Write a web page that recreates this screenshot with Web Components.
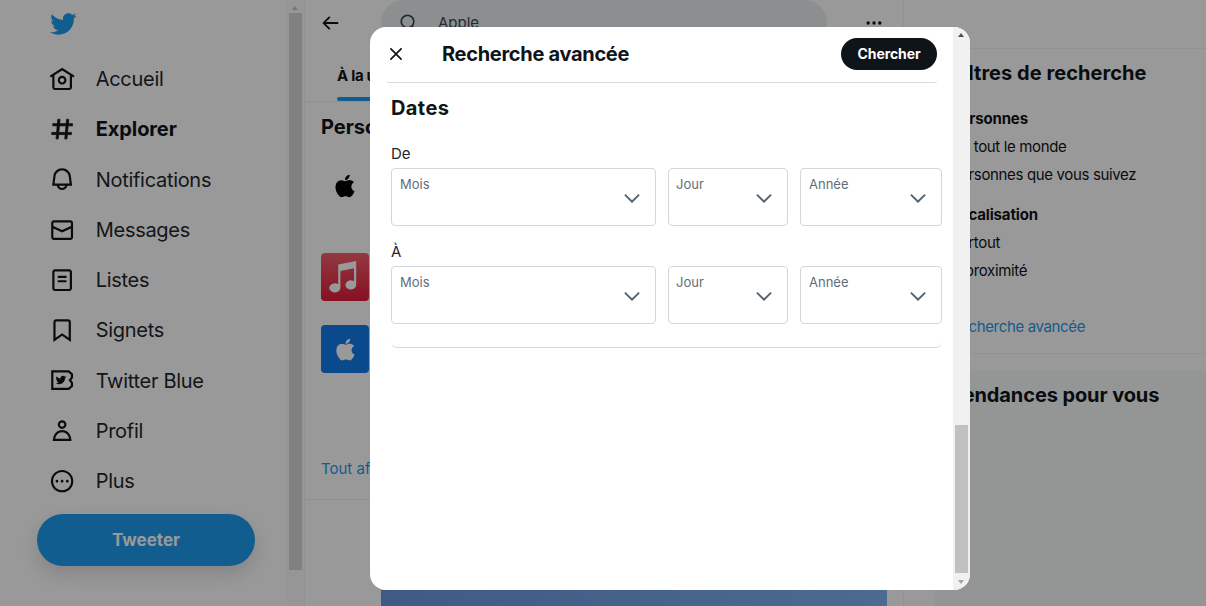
<!DOCTYPE html>
<html lang="fr">
<head>
<meta charset="utf-8">
<title>Recherche avancée</title>
<style>
  html, body { margin: 0; height: 100%; overflow: hidden; background: #fff; }
  body { font-family: Inter, "Noto Sans", "Liberation Sans", sans-serif; color: #0f1419; }
</style>
</head>
<body>
<app-shell>
  <side-nav slot="nav"></side-nav>
  <fake-scrollbar slot="bar" thumb-top="13" thumb-height="557" color="#d5d5d5" track="#fbfbfb" up="#c4c4c4" no-down></fake-scrollbar>
  <search-column slot="main"></search-column>
  <filter-column slot="aside"></filter-column>
</app-shell>
<advanced-modal>
  <date-row label="De"></date-row>
  <date-row label="À"></date-row>
</advanced-modal>

<script>
// Icon paths, all on a 24x24 box
const ICONS = {
  bird: 'M23.643 4.937c-.835.37-1.732.62-2.675.733.962-.576 1.7-1.49 2.048-2.578-.9.534-1.897.922-2.958 1.13-.85-.904-2.06-1.47-3.4-1.47-2.572 0-4.658 2.086-4.658 4.66 0 .364.042.718.12 1.06-3.873-.195-7.304-2.05-9.602-4.868-.4.69-.63 1.49-.63 2.342 0 1.616.823 3.043 2.072 3.878-.764-.025-1.482-.234-2.11-.583v.06c0 2.257 1.605 4.14 3.737 4.568-.392.106-.803.162-1.227.162-.3 0-.593-.028-.877-.082.593 1.85 2.313 3.198 4.352 3.234-1.595 1.25-3.604 1.995-5.786 1.995-.376 0-.747-.022-1.112-.065 2.062 1.323 4.51 2.093 7.14 2.093 8.57 0 13.255-7.098 13.255-13.254 0-.2-.005-.402-.014-.602.91-.658 1.7-1.477 2.323-2.41z',
  home: 'M12 9c-2.209 0-4 1.791-4 4s1.791 4 4 4 4-1.791 4-4-1.791-4-4-4zm0 6c-1.105 0-2-.895-2-2s.895-2 2-2 2 .895 2 2-.895 2-2 2zm0-13.304L.622 8.807l1.06 1.696L3 9.679V19.5C3 20.881 4.119 22 5.5 22h13c1.381 0 2.5-1.119 2.5-2.5V9.679l1.318.824 1.06-1.696L12 1.696zM19 19.5c0 .276-.224.5-.5.5h-13c-.276 0-.5-.224-.5-.5V8.429l7-4.375 7 4.375V19.5z',
  hash: 'M10.09 3.098L9.72 7h5.99l.39-4.089 1.99.187L17.72 7h3.78v2h-3.97l-.56 6h3.53v2h-3.72l-.38 4.089-1.99-.187.36-3.902H8.78l-.38 4.089-1.99-.187L6.77 17H2.5v-2h4.46l.56-6H3.5V7h4.21l.39-4.089 1.99.187zM14.96 15l.56-6H9.53l-.56 6h5.99z',
  bell: 'M19.993 9.042C19.48 5.017 16.054 2 11.996 2s-7.49 3.021-7.999 7.051L2.866 18H7.1c.463 2.282 2.481 4 4.9 4s4.437-1.718 4.9-4h4.236l-1.143-8.958zM12 20c-1.306 0-2.417-.835-2.829-2h5.658c-.412 1.165-1.523 2-2.829 2zm-6.866-4l.847-6.698C6.364 6.272 8.941 4 11.996 4s5.627 2.268 6.013 5.295L18.864 16H5.134z',
  mail: 'M1.998 5.5c0-1.381 1.119-2.5 2.5-2.5h15c1.381 0 2.5 1.119 2.5 2.5v13c0 1.381-1.119 2.5-2.5 2.5h-15c-1.381 0-2.5-1.119-2.5-2.5v-13zm2.5-.5c-.276 0-.5.224-.5.5v2.764l8 3.638 8-3.636V5.5c0-.276-.224-.5-.5-.5h-15zm15.5 5.463l-8 3.636-8-3.638V18.5c0 .276.224.5.5.5h15c.276 0 .5-.224.5-.5v-8.037z',
  list: 'M3 4.5C3 3.12 4.119 2 5.5 2h13C19.881 2 21 3.12 21 4.5v15c0 1.38-1.119 2.5-2.5 2.5h-13C4.119 22 3 20.88 3 19.5v-15zM5.5 4c-.276 0-.5.22-.5.5v15c0 .28.224.5.5.5h13c.276 0 .5-.22.5-.5v-15c0-.28-.224-.5-.5-.5h-13zM16 10H8V8h8v2zm-8 2h8v2H8v-2z',
  mark: 'M4 4.5C4 3.12 5.119 2 6.5 2h11C18.881 2 20 3.12 20 4.5v18.44l-8-5.71-8 5.71V4.5zM6.5 4c-.276 0-.5.22-.5.5v14.56l6-4.29 6 4.29V4.5c0-.28-.224-.5-.5-.5h-11z',
  blue: 'M2 3h16.4L22 6.2v3.7L20.4 12l1.6 2.1v3.7L18.4 21H2V3zm2 2v14h13.6l2.4-2.1v-2.1L17.9 12 20 9.2V7.1L17.6 5H4zm3.2 3.9c.9.9 2 1.5 3.3 1.6-.2-1.5 1-2.6 2.2-2.6.6 0 1.2.3 1.6.7.5-.1.9-.3 1.3-.5-.2.5-.5.9-1 1.2.4 0 .8-.2 1.2-.3-.3.4-.7.8-1.1 1.1 0 3-2.2 5.6-5.5 5.6-1.1 0-2.1-.3-3-.9 1 .1 2-.2 2.7-.8-.8 0-1.5-.6-1.8-1.3.3.1.5.1.8 0-.9-.2-1.5-1-1.5-1.9.3.1.5.2.8.2-.8-.6-1.1-1.7-.5-2.1z',
  user: 'M5.651 19h12.698c-.337-1.8-1.023-3.21-1.945-4.19C15.318 13.65 13.838 13 12 13s-3.317.65-4.404 1.81c-.922.98-1.608 2.39-1.945 4.19zm.486-5.56C7.627 11.85 9.648 11 12 11s4.373.85 5.863 2.44c1.477 1.58 2.366 3.8 2.632 6.46l.11 1.1H3.395l.11-1.1c.266-2.66 1.155-4.88 2.632-6.46zM12 4c-1.105 0-2 .9-2 2s.895 2 2 2 2-.9 2-2-.895-2-2-2zM8 6c0-2.21 1.791-4 4-4s4 1.79 4 4-1.791 4-4 4-4-1.79-4-4z',
  more: 'M3.75 12c0-4.56 3.69-8.25 8.25-8.25s8.25 3.69 8.25 8.25-3.69 8.25-8.25 8.25S3.75 16.56 3.75 12zM12 1.75C6.34 1.75 1.75 6.34 1.75 12S6.34 22.25 12 22.25 22.25 17.66 22.25 12 17.66 1.75 12 1.75zm-4.75 11.5c.69 0 1.25-.56 1.25-1.25s-.56-1.25-1.25-1.25S6 11.31 6 12s.56 1.25 1.25 1.25zm9.5 0c.69 0 1.25-.56 1.25-1.25s-.56-1.25-1.25-1.25-1.25.56-1.25 1.25.56 1.25 1.25 1.25zM13.25 12c0 .69-.56 1.25-1.25 1.25s-1.25-.56-1.25-1.25.56-1.25 1.25-1.25 1.25.56 1.25 1.25z',
  back: 'M7.414 13l5.043 5.04-1.414 1.42L3.586 12l7.457-7.46 1.414 1.42L7.414 11H21v2H7.414z',
  search: 'M10.25 3.75c-3.59 0-6.5 2.91-6.5 6.5s2.91 6.5 6.5 6.5c1.795 0 3.419-.726 4.596-1.904 1.178-1.177 1.904-2.801 1.904-4.596 0-3.59-2.91-6.5-6.5-6.5zm-8.5 6.5c0-4.694 3.806-8.5 8.5-8.5s8.5 3.806 8.5 8.5c0 1.986-.682 3.815-1.824 5.262l4.781 4.781-1.414 1.414-4.781-4.781c-1.447 1.142-3.276 1.824-5.262 1.824-4.694 0-8.5-3.806-8.5-8.5z',
  close: 'M10.59 12L4.54 5.96l1.42-1.42L12 10.59l6.04-6.05 1.42 1.42L13.41 12l6.05 6.04-1.42 1.42L12 13.41l-6.04 6.05-1.42-1.42L10.59 12z',
  chevron: 'M3.543 8.96l1.414-1.42L12 14.59l7.043-7.05 1.414 1.42L12 17.41 3.543 8.96z',
  dots: 'M3 12a2 2 0 1 1 4 0 2 2 0 0 1-4 0zm7 0a2 2 0 1 1 4 0 2 2 0 0 1-4 0zm7 0a2 2 0 1 1 4 0 2 2 0 0 1-4 0z',
  apple: 'M17.05 20.28c-.98.95-2.05.8-3.08.35-1.09-.46-2.09-.48-3.24 0-1.44.62-2.2.44-3.06-.35C2.79 15.25 3.51 7.59 9.05 7.31c1.35.07 2.29.74 3.08.8 1.18-.24 2.31-.93 3.57-.84 1.51.12 2.65.72 3.4 1.8-3.12 1.87-2.38 5.98.48 7.13-.57 1.5-1.31 2.99-2.54 4.09zM12.03 7.25c-.15-2.23 1.66-4.07 3.74-4.25.29 2.58-2.34 4.5-3.74 4.25z',
  music: 'M8.6 5.8L17.6 4v12a2.7 2.3 0 1 1-1.1-1.9V7.6L9.7 9v8.500a2.800 2.300 0 1 1-1.100-1.900z'
};

class TwIcon extends HTMLElement {
  connectedCallback() {
    if (this.shadowRoot) return;
    const size = this.getAttribute('size') || 24;
    const bold = this.hasAttribute('bold');
    this.attachShadow({ mode: 'open' }).innerHTML = `
      <style>:host { display: block; width: ${size}px; height: ${size}px; flex: none; }
      svg { display: block; width: 100%; height: 100%; fill: currentColor; }</style>
      <svg viewBox="0 0 24 24"${bold ? ' stroke="currentColor" stroke-width=".7"' : ''}><path d="${ICONS[this.getAttribute('name')]}"/></svg>`;
  }
}
customElements.define('tw-icon', TwIcon);

/* page grid: nav, its scrollbar, the search column, the filters */
class AppShell extends HTMLElement {
  constructor() {
    super();
    this.attachShadow({ mode: 'open' }).innerHTML = `
      <style>
        :host { display: grid; grid-template-columns: 287px 17px 600px 302px; height: 606px; overflow: hidden; }
      </style>
      <slot name="nav"></slot><slot name="bar"></slot><slot name="main"></slot><slot name="aside"></slot>`;
  }
}
customElements.define('app-shell', AppShell);

class FakeScrollbar extends HTMLElement {
  connectedCallback() {
    if (this.shadowRoot) return;
    const top = this.getAttribute('thumb-top'), h = this.getAttribute('thumb-height');
    this.attachShadow({ mode: 'open' }).innerHTML = `
      <style>
        :host { display: block; width: 17px; height: 100%; position: relative; background: ${this.getAttribute('track') || '#f1f1f1'}; }
        .thumb { position: absolute; left: 2px; right: 2px; top: ${top}px; height: ${h}px; background: ${this.getAttribute('color') || '#c1c1c1'}; }
        .up, .down { position: absolute; left: 5px; border-left: 3.5px solid transparent; border-right: 3.5px solid transparent; }
        .up { top: 6px; border-bottom: 4px solid ${this.getAttribute('up') || '#505050'}; }
        .down { bottom: 6px; border-top: 4px solid #a3a3a3; }
      </style>
      <div class="up"></div><div class="thumb"></div>${this.hasAttribute('no-down') ? '' : '<div class="down"></div>'}`;
  }
}
customElements.define('fake-scrollbar', FakeScrollbar);

class NavItem extends HTMLElement {
  connectedCallback() {
    if (this.shadowRoot) return;
    const active = this.hasAttribute('active');
    this.attachShadow({ mode: 'open' }).innerHTML = `
      <style>
        :host { display: flex; align-items: center; gap: 20.5px; height: 50.25px; padding-left: 12px; font-size: 20px; letter-spacing: ${active ? '-.1px' : '-.3px'}; font-weight: ${active ? 700 : 400}; }
        span { color: ${active ? '#0f1419' : '#1f272d'}; }
      </style>
      <tw-icon name="${this.getAttribute('icon')}" size="26.25"${active ? ' bold' : ''}></tw-icon>
      <span><slot></slot></span>`;
  }
}
customElements.define('nav-item', NavItem);

class SideNav extends HTMLElement {
  constructor() {
    super();
    const items = [['home', 'Accueil'], ['hash', 'Explorer', 1], ['bell', 'Notifications'], ['mail', 'Messages'], ['list', 'Listes'],
      ['mark', 'Signets'], ['blue', 'Twitter Blue'], ['user', 'Profil'], ['more', 'Plus']];
    this.attachShadow({ mode: 'open' }).innerHTML = `
      <style>
        :host { display: block; padding-left: 37px; box-sizing: border-box; height: 606px; overflow: hidden; }
        .logo { height: 53.875px; padding: 10px 0 0 12px; box-sizing: border-box; color: #1d9bf0; }
        button { display: block; width: 218px; height: 52px; margin-top: 8px; border: 0; border-radius: 26px; background: #1d9bf0; color: #fff;
          font: 700 17px Inter, "Noto Sans", sans-serif; box-shadow: 0 8px 20px rgba(0,0,0,.14); }
      </style>
      <div class="logo"><tw-icon name="bird" size="28"></tw-icon></div>
      ${items.map(i => `<nav-item icon="${i[0]}"${i[2] ? ' active' : ''}>${i[1]}</nav-item>`).join('')}
      <button>Tweeter</button>`;
  }
}
customElements.define('side-nav', SideNav);

class SearchColumn extends HTMLElement {
  constructor() {
    super();
    this.attachShadow({ mode: 'open' }).innerHTML = `
      <style>
        :host { display: flex; flex-direction: column; border-left: 1px solid #eff3f4; border-right: 1px solid #eff3f4; box-sizing: border-box; height: 606px; overflow: hidden; }
        .top { display: flex; align-items: center; height: 45px; flex: none; padding-left: 14px; }
        .bar { display: flex; align-items: center; width: 446px; height: 45px; margin-left: 40px; padding-left: 18px; box-sizing: border-box; border-radius: 23px; background: #e9eff0; font-size: 15px; color: #3c4850; }
        .bar span { margin-left: 19px; }
        .dots { margin-left: 37px; }
        .tabs { flex: none; height: 57px; padding-left: 32px; box-sizing: border-box; border-bottom: 1px solid #eff3f4; }
        .tab { display: inline-flex; flex-direction: column; justify-content: flex-end; height: 56px; width: 100px; font-size: 15px; font-weight: 700; letter-spacing: -.3px; }
        .tab span { margin-bottom: 12px; }
        .tab i { display: block; height: 4px; border-radius: 2px; background: #1d9bf0; }
        h2 { margin: 13px 0 0 16px; font-size: 20px; line-height: 24px; font-weight: 700; }
        .who { display: flex; flex-direction: column; padding-left: 16px; }
        .apple { margin: 32px 0 0 9px; color: #000; }
        .tile { width: 48px; height: 48px; border-radius: 4px; color: #fff; display: flex; align-items: center; justify-content: center; }
        .red { margin-top: 52px; background: linear-gradient(#f4606e, #e01c38); }
        .navy { margin-top: 24px; background: #0f7bea; }
        .all { margin: 87px 0 0 16px; font-size: 15px; line-height: 18px; color: #1d9bf0; }
        hr { margin: 21px 0 0; border: 0; border-top: 1px solid #eff3f4; flex: none; }
        .media { flex: none; margin: 90px 16px 0 76px; height: 100px; background: linear-gradient(90deg, #6a96e0, #80b2f0); }
      </style>
      <div class="top">
        <tw-icon name="back" size="22"></tw-icon>
        <div class="bar"><tw-icon name="search" size="20"></tw-icon><span>Apple</span></div>
        <tw-icon class="dots" name="dots" size="20"></tw-icon>
      </div>
      <div class="tabs"><div class="tab"><span>À la une</span><i></i></div></div>
      <h2>Personnes</h2>
      <div class="who">
        <tw-icon class="apple" name="apple" size="30"></tw-icon>
        <div class="tile red"><tw-icon name="music" size="48"></tw-icon></div>
        <div class="tile navy"><tw-icon name="apple" size="29"></tw-icon></div>
      </div>
      <div class="all">Tout afficher</div>
      <hr>
      <div class="media"></div>`;
  }
}
customElements.define('search-column', SearchColumn);

class FilterColumn extends HTMLElement {
  constructor() {
    super();
    this.attachShadow({ mode: 'open' }).innerHTML = `
      <style>
        :host { display: block; height: 606px; overflow: hidden; }
        .panel { margin-top: 48px; border-top: 1px solid #eff3f4; border-bottom: 1px solid #eff3f4; height: 304px; box-sizing: content-box; padding-left: 47px; }
        h2 { margin: 0; font-size: 20px; line-height: 24px; font-weight: 700; }
        .panel h2 { padding-top: 12px; letter-spacing: .05px; }
        h3 { margin: 0; font-size: 15px; line-height: 20px; font-weight: 700; letter-spacing: -.15px; }
        p { margin: 0; font-size: 15px; line-height: 20px; letter-spacing: -.35px; }
        .a { margin-top: 24px; }
        p.r { margin-top: 8px; }
        .b { margin-top: 20px; }
        .more { margin-top: 36px; color: #1d9bf0; }
        .trends { margin: 17px 0 0 30px; height: 240px; background: #f7f9f9; padding: 12px 0 0 17px; }
        .trends h2 { letter-spacing: -.1px; }
      </style>
      <div class="panel">
        <h2>Filtres de recherche</h2>
        <h3 class="a">Personnes</h3>
        <p class="r">De tout le monde</p>
        <p class="r">Personnes que vous suivez</p>
        <h3 class="b">Localisation</h3>
        <p class="r">Partout</p>
        <p class="r">À proximité</p>
        <p class="more">Recherche avancée</p>
      </div>
      <div class="trends"><h2>Tendances pour vous</h2></div>`;
  }
}
customElements.define('filter-column', FilterColumn);

class DateSelect extends HTMLElement {
  connectedCallback() {
    if (this.shadowRoot) return;
    this.attachShadow({ mode: 'open' }).innerHTML = `
      <style>
        :host { display: block; position: relative; box-sizing: border-box; height: 58px; border: 1px solid #d2d8da; border-radius: 4px; flex: ${this.getAttribute('w')}px 0 0; padding: 7px 8px 7px ${this.getAttribute('pad') || 8}px; font-size: 13px; line-height: 16px; color: #5f6e78; }
        tw-icon { position: absolute; right: 12px; top: 18px; color: #536471; }
      </style>
      <slot></slot><tw-icon name="chevron" size="22"></tw-icon>`;
  }
}
customElements.define('date-select', DateSelect);

class DateRow extends HTMLElement {
  connectedCallback() {
    if (this.shadowRoot) return;
    this.attachShadow({ mode: 'open' }).innerHTML = `
      <style>
        :host { display: block; margin-bottom: 16px; }
        .label { font-size: 15px; line-height: 20px; margin-bottom: 4px; color: #1f272d; }
        .boxes { display: flex; gap: 12px; }
      </style>
      <div class="label">${this.getAttribute('label')}</div>
      <div class="boxes">
        <date-select w="265">Mois</date-select>
        <date-select w="120" pad="7">Jour</date-select>
        <date-select w="142">Année</date-select>
      </div>`;
  }
}
customElements.define('date-row', DateRow);

/* the dialog and the grey layer behind it */
class AdvancedModal extends HTMLElement {
  constructor() {
    super();
    this.attachShadow({ mode: 'open' }).innerHTML = `
      <style>
        :host { position: fixed; inset: 0; display: block; background: rgba(0,0,0,.4); }
        .dialog { position: absolute; left: 370px; top: 27px; width: 600px; height: 563px; display: flex; background: #fff; border-radius: 16px; overflow: hidden; }
        .content { flex: 1; min-width: 0; }
        header { display: flex; align-items: center; height: 53px; padding: 0 16px; }
        .title { margin-left: 36px; font-size: 20px; font-weight: 700; line-height: 24px; flex: 1; letter-spacing: -.3px; }
        button { width: 96px; height: 32px; border: 0; border-radius: 16px; background: #0f1419; color: #fff; font: 700 14px Inter, "Noto Sans", sans-serif; letter-spacing: -.1px; }
        .cut { margin: 0 16px; height: 2px; border-bottom: 1px solid #d6dadb; border-radius: 0 0 6px 6px; }
        .body { padding: 0 11px 0 21px; }
        h2 { margin: 13px 0 24px; font-size: 20px; line-height: 24px; font-weight: 700; letter-spacing: .4px; }
        .end { height: 7px; border-bottom: 1px solid #d6dadb; border-radius: 0 0 6px 6px; }
      </style>
      <div class="dialog">
        <div class="content">
          <header>
            <tw-icon name="close" size="20"></tw-icon>
            <div class="title">Recherche avancée</div>
            <button>Chercher</button>
          </header>
          <div class="cut"></div>
          <div class="body">
            <h2>Dates</h2>
            <slot></slot>
            <div class="end"></div>
          </div>
        </div>
        <fake-scrollbar thumb-top="398" thumb-height="148"></fake-scrollbar>
      </div>`;
  }
}
customElements.define('advanced-modal', AdvancedModal);
</script>
</body>
</html>
